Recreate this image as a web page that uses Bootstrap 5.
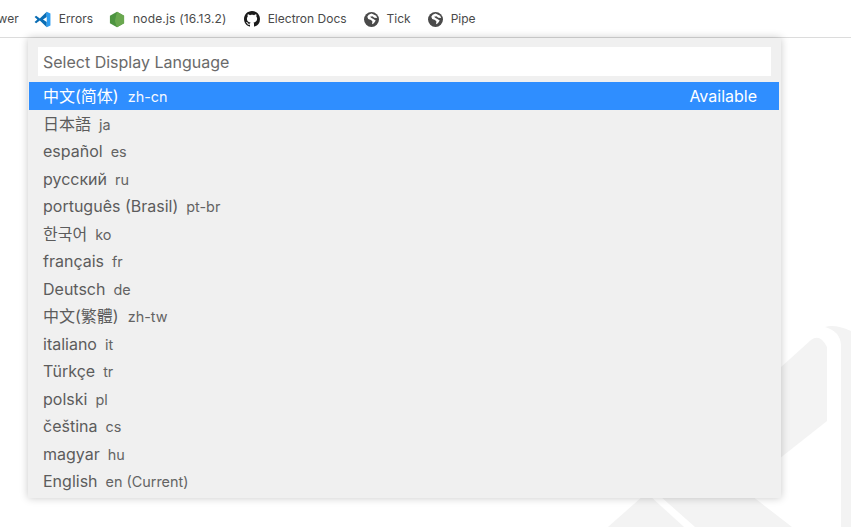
<!DOCTYPE html>
<html lang="en">
<head>
  <meta charset="UTF-8" />
  <title>Select Display Language</title>
  <link href="https://cdn.jsdelivr.net/npm/bootstrap@5.3.3/dist/css/bootstrap.min.css" rel="stylesheet" />
  <style>
    html, body { height: 100%; }
    body {
      background: #fff;
      font-family: Inter, "Noto Sans CJK SC", sans-serif;
      overflow: hidden;
    }
    .top-strip {
      height: 38px;
      border-bottom: 1px solid #dcdcdc;
      padding-top: 1px;
      font-size: 12px;
      color: #4a4a4a;
      white-space: nowrap;
      margin-left: -17px;
      gap: 17px;
    }
    .top-strip svg { flex: none; }
    .strip-item { gap: 8px; }
    .cut-item { margin-right: -2px; }
    .errors-item { margin-right: -1px; }
    .node-label { letter-spacing: .18px; }
    .logo-bg { position: absolute; left: 0; top: 0; }
    .lang-panel {
      position: relative;
      width: 753px;
      height: 460px;
      margin-left: 28px;
      background: #f0f0f0;
      box-shadow: 0 0 8px rgba(0, 0, 0, .22);
      padding: 9px 1px 0 1px;
    }
    .lang-input.form-control {
      width: 733px;
      height: 29px;
      margin: 0 0 6px 9px;
      padding: 1px 5px 0;
      border: 0;
      border-radius: 0;
      background: #fff;
      color: #616161;
      font-size: 16px;
    }
    .lang-input::placeholder { color: #6a6a6a; opacity: 1; }
    .lang-list { width: 750px; }
    .lang-list .list-group-item {
      height: 27.5px;
      padding: 1px 22px 0 14px;
      border: 0;
      border-radius: 0;
      background: transparent;
      color: #5c5c5c;
      font-size: 16px;
      line-height: 27.5px;
      white-space: nowrap;
    }
    .lang-list .list-group-item.active { background: #2f8eff; color: #fff; }
    .lang-code { font-size: 14.4px; margin-left: 8px; opacity: .95; }
    .lang-cjk .lang-code { margin-left: 9px; }
  </style>
</head>
<body>

  <!-- watermark behind the panel -->
  <svg class="logo-bg" width="851" height="527" viewBox="0 0 851 527" fill="#f3f3f3">
    <path d="M770 377 L811 340 Q820 333 827 347 L827 421 L770 466 Z"/>
    <path d="M825 327 Q835 324 851 331 L851 527 L841 527 L841 345 Q840 331 825 327 Z"/>
    <path d="M608 527 L643 496 L650 496 L684 527 Z" />
    <path d="M660 496 L752 496 L792 527 L695 527 Z"/>
  </svg>

  <div class="top-strip d-flex align-items-center">
    <span class="cut-item">Power</span>
    <span class="strip-item errors-item d-flex align-items-center">
      <svg width="17" height="17" viewBox="0 0 24 24"><path fill="#0a6db4" d="M.8 8.600 3 6.600l5.200 4L18 1v7.300L12.700 12 18 15.700V23l-9.800-9.600-5.200 4-2.200-2L4.800 12z"/><path fill="#2b9cf0" d="M18 1l5.200 2.500v17L18 23z"/></svg>
      <span>Errors</span>
    </span>
    <span class="strip-item d-flex align-items-center">
      <svg width="16" height="17" viewBox="0 0 22 24"><path fill="#4d9440" d="M11 1l10 5.700v10.600L11 23 1 17.300V6.700z"/><path fill="#6aa84f" d="M11 1l10 5.700v10.600L11 23l-3-9z"/></svg>
      <span class="node-label">node.js (16.13.2)</span>
    </span>
    <span class="strip-item d-flex align-items-center">
      <svg width="16" height="16" viewBox="0 0 16 16"><path fill="#1b1b1b" d="M8 0C3.580 0 0 3.580 0 8c0 3.540 2.290 6.530 5.470 7.590.4.070.55-.17.55-.38 0-.19-.01-.82-.01-1.490-2.010.37-2.530-.49-2.690-.94-.09-.23-.48-.94-.82-1.130-.28-.15-.68-.52-.01-.53.63-.01 1.080.58 1.230.82.720 1.210 1.870.87 2.330.66.070-.52.280-.87.510-1.070-1.780-.2-3.640-.89-3.640-3.950 0-.87.310-1.590.820-2.150-.08-.2-.36-1.020.08-2.120 0 0 .67-.21 2.200.82.640-.18 1.320-.27 2-.27s1.360.09 2 .27c1.530-1.040 2.200-.82 2.200-.82.440 1.100.16 1.920.08 2.120.51.560.82 1.270.82 2.150 0 3.070-1.870 3.750-3.650 3.950.29.250.54.730.54 1.480 0 1.070-.01 1.930-.01 2.200 0 .21.150.46.550.38A8.010 8.010 0 0 0 16 8c0-4.420-3.580-8-8-8z"/></svg>
      <span>Electron Docs</span>
    </span>
    <span class="strip-item d-flex align-items-center">
      <svg width="15" height="15" viewBox="0 0 16 16"><circle cx="8" cy="8" r="8" fill="#4a4a4a"/><path fill="#fff" d="M8 1.500 5 3 3.500 5l1 2.500 3 1L9 10l-.5 3 2-1 2-3-2.500-1.500L8 6.500 6.500 5 9 4.500l2 1.500 3 .5L13 4z"/></svg>
      <span>Tick</span>
    </span>
    <span class="strip-item d-flex align-items-center">
      <svg width="15" height="15" viewBox="0 0 16 16"><circle cx="8" cy="8" r="8" fill="#4a4a4a"/><path fill="#fff" d="M8 1.500 5 3 3.500 5l1 2.500 3 1L9 10l-.5 3 2-1 2-3-2.500-1.500L8 6.500 6.500 5 9 4.500l2 1.500 3 .5L13 4z"/></svg>
      <span>Pipe</span>
    </span>
  </div>

  <div class="lang-panel">
    <input class="lang-input form-control" type="text" placeholder="Select Display Language" />
    <div class="lang-list list-group">
      <div class="list-group-item active lang-cjk d-flex justify-content-between">
        <span>中文(简体)<span class="lang-code">zh-cn</span></span>
        <span>Available</span>
      </div>
      <div class="list-group-item">日本語<span class="lang-code">ja</span></div>
      <div class="list-group-item">español<span class="lang-code">es</span></div>
      <div class="list-group-item">русский<span class="lang-code">ru</span></div>
      <div class="list-group-item">português (Brasil)<span class="lang-code">pt-br</span></div>
      <div class="list-group-item">한국어<span class="lang-code">ko</span></div>
      <div class="list-group-item">français<span class="lang-code">fr</span></div>
      <div class="list-group-item">Deutsch<span class="lang-code">de</span></div>
      <div class="list-group-item lang-cjk">中文(繁體)<span class="lang-code">zh-tw</span></div>
      <div class="list-group-item">italiano<span class="lang-code">it</span></div>
      <div class="list-group-item">Türkçe<span class="lang-code">tr</span></div>
      <div class="list-group-item">polski<span class="lang-code">pl</span></div>
      <div class="list-group-item">čeština<span class="lang-code">cs</span></div>
      <div class="list-group-item">magyar<span class="lang-code">hu</span></div>
      <div class="list-group-item">English<span class="lang-code">en (Current)</span></div>
    </div>
  </div>

  <script src="https://cdn.jsdelivr.net/npm/bootstrap@5.3.3/dist/js/bootstrap.bundle.min.js"></script>
</body>
</html>
